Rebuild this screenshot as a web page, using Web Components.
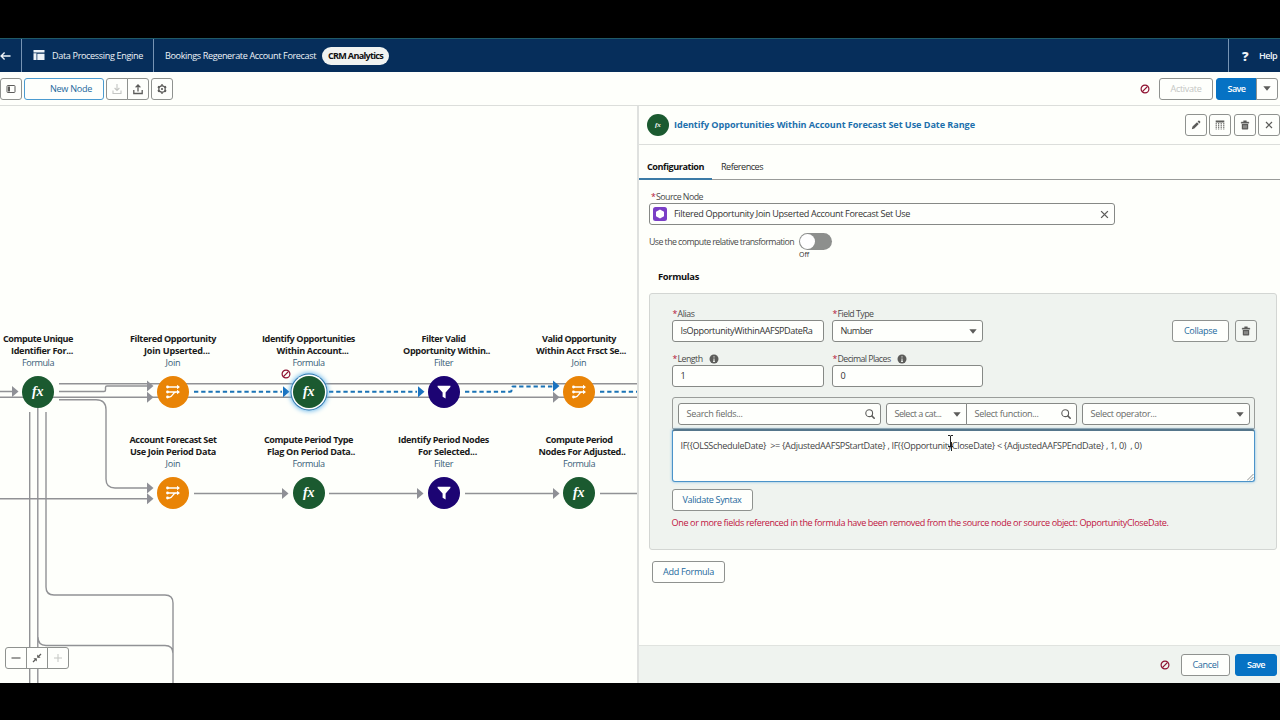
<!DOCTYPE html>
<html lang="en">
<head>
<meta charset="utf-8">
<title>Data Processing Engine</title>
<style>
  html, body { margin: 0; height: 100%; background: #000; overflow: hidden; }
  body { font: 9.1px/12px "Open Sans", "Noto Sans", sans-serif; color: #2b2b2b; }
</style>
</head>
<body>
<dpe-app></dpe-app>

<script>
// icons, all drawn on their own viewBox
const ICONS = {
  back: ['0 0 12 10', '<path d="M11.5 5H1.2M5 1.2 1.2 5 5 8.8" fill="none" stroke="currentColor" stroke-width="1.5"/>'],
  layout: ['0 0 12 11', '<path d="M.5 0h11v2.6H.5zM.5 3.200h3V10h-3zM4.300 3.700h7.200V10H4.300z" fill="currentColor"/>'],
  panel: ['0 0 10 8', '<rect x="1" y=".5" width="8" height="7" rx=".8" fill="none" stroke="currentColor"/><path d="M2 1.5h2v5H2z" fill="currentColor"/>'],
  download: ['0 0 12 12', '<path d="M2 7.5V10.500h8V7.5M6 1v6.500M3.600 5 6 7.500 8.400 5" fill="none" stroke="currentColor" stroke-width="1.1"/>'],
  upload: ['0 0 12 12', '<path d="M1.800 7V10.500h8.400V7M6 8.500V2M3.600 4.400 6 2 8.400 4.400" fill="none" stroke="currentColor" stroke-width="1.3"/>'],
  gear: ['0 0 12 12', '<circle cx="6" cy="6" r="3.2" fill="none" stroke="currentColor" stroke-width="1.3"/><circle cx="6" cy="6" r="1.1" fill="currentColor"/><path d="M6 1.300v1.500M6 9.200v1.500M1.900 3.650l1.300.75M8.800 7.600l1.300.75M1.900 8.350l1.300-.75M8.800 4.400l1.300-.75" stroke="currentColor" stroke-width="1.800"/>'],
  ban: ['0 0 10 10', '<circle cx="5" cy="5" r="3.9" fill="none" stroke="#8e1030" stroke-width="1.2"/><path d="M2.400 7.600 7.600 2.400" stroke="#8e1030" stroke-width="1.3"/>'],
  down: ['0 0 8 5', '<path d="M.3.200h7.400L4 4.800z" fill="currentColor"/>'],
  pencil: ['0 0 10 10', '<path d="M.8 9.200l.7-2.600L6 2.200 7.800 4 3.300 8.500zM6.600 1.600l.8-.8q.5-.4 1 0l.8.8q.4.500 0 1l-.8.800z" fill="currentColor"/>'],
  table: ['0 0 10 10', '<path d="M.7.500h8.600v2H.7z" fill="currentColor"/><path d="M1.200 3v6.500M3.700 3v6.500M6.200 3v6.500M8.800 3v6.500" stroke="currentColor" stroke-width="1" stroke-dasharray="1.500 .5"/>'],
  trash: ['0 0 10 10', '<path d="M1.200 2h7.600v1.300H1.200zM3.600 2V.700h2.800V2" fill="currentColor" stroke="currentColor" stroke-width=".4"/><path d="M1.800 4h6.400v4.700q0 .8-.8.800H2.600q-.8 0-.8-.8z" fill="currentColor"/><path d="M4 5.200v3M6 5.200v3" stroke="#ddd" stroke-width=".7"/>'],
  close: ['0 0 8 8', '<path d="M1 1l6 6M7 1 1 7" stroke="currentColor" stroke-width="1.200"/>'],
  search: ['0 0 10 10', '<circle cx="4.200" cy="4.200" r="3.400" fill="none" stroke="currentColor" stroke-width="1.100"/><path d="M6.600 6.600 9.700 9.700" stroke="currentColor" stroke-width="1.500"/>'],
  info: ['0 0 10 10', '<circle cx="5" cy="5" r="4.500" fill="#5c5c5a"/><path d="M5 2.300v1.200M5 4.500v3M4 7.400h2" stroke="#eff3ef" stroke-width="1"/>'],
  hex: ['0 0 14 14', '<rect width="14" height="14" rx="2.500" fill="#7a3fc6"/><path d="M7 3.400 10.200 5.200v3.600L7 10.600 3.800 8.800V5.200z" fill="#fff" stroke="#fff" stroke-width="1.600" stroke-linejoin="round"/>'],
  minus: ['0 0 10 10', '<path d="M.5 5h9" stroke="currentColor" stroke-width="1.200"/>'],
  plus: ['0 0 10 10', '<path d="M1 5h8M5 1v8" stroke="currentColor" stroke-width="1"/>'],
  shrink: ['0 0 10 10', '<path d="M1 9l3-3M9 1 6 4" stroke="currentColor" stroke-width="1.300"/><path d="M1.400 5.200h3.400v3.400zM8.600 4.800H5.200V1.400z" fill="currentColor"/>'],
  join: ['0 0 16 16', '<g fill="none" stroke="#fff" stroke-width="1.400"><path d="M2 3h12M2 8h12M2 13h2.500C8 13 7.500 8 11 8"/></g><g fill="#fff"><circle cx="2.500" cy="3" r="1.400"/><path d="M12 .8 15 3l-3 2.200zM12 5.800 15 8l-3 2.200z"/><circle cx="2.500" cy="8" r="1.400"/><circle cx="2.500" cy="13" r="1.400"/></g>'],
  filter: ['0 0 16 16', '<path d="M1.600 1.800h12.800v1.100L9.600 8.500v6L6.600 12.800V8.500L1.600 2.900z" fill="#fff"/>'],
  formula: ['0 0 16 16', '<text x="7.800" y="11.500" text-anchor="middle" font-family="Liberation Serif, serif" font-style="italic" font-weight="bold" font-size="14" fill="#fff">fx</text>']
};

class UiIcon extends HTMLElement {
  connectedCallback() {
    const [box, body] = ICONS[this.getAttribute('name')];
    const w = this.getAttribute('w') || 10;
    const h = this.getAttribute('h') || w;
    this.attachShadow({ mode: 'open' }).innerHTML = `
      <style>:host { display: inline-flex; flex: none; } svg { display: block; }</style>
      <svg width="${w}" height="${h}" viewBox="${box}">${body}</svg>`;
  }
}

// one line of text, tracked so that it fills the width in "w"
class UiText extends HTMLElement {
  connectedCallback() {
    this.attachShadow({ mode: 'open' }).innerHTML = `
      <style>:host { display: flex; flex: none; } span { display: block; white-space: pre; }</style>
      <span><slot></slot></span>`;
    const w = parseFloat(this.getAttribute('w'));
    if (!w) return;
    const span = this.shadowRoot.querySelector('span');
    const diff = w - span.getBoundingClientRect().width;
    span.style.letterSpacing = (diff / this.textContent.length) + 'px';
  }
}

class UiButton extends HTMLElement {
  connectedCallback() {
    this.attachShadow({ mode: 'open' }).innerHTML = `
      <style>
        :host { display: flex; align-items: center; justify-content: center; flex: none;
          box-sizing: border-box; width: ${this.getAttribute('width') || 22}px; height: 22px;
          border: 1px solid #8f928f; border-radius: 3px; background: #fefffc; color: #24699c; }
        :host([icon]) { color: #5c5c5a; }
        :host([brand]) { background: #0672c4; border-color: #0672c4; color: #fff; font-weight: 600; }
        :host([outline]) { border-color: #4b9bd0; }
        :host([disabled]) { color: #c4c6c3; }
        :host([first]) { border-radius: 3px 0 0 3px; }
        :host([mid]) { border-radius: 0; margin-left: -1px; }
        :host([last]) { border-radius: 0 3px 3px 0; margin-left: -1px; }
      </style>
      <slot></slot>`;
  }
}

class UiField extends HTMLElement {
  connectedCallback() {
    this.attachShadow({ mode: 'open' }).innerHTML = `
      <style>
        :host { display: flex; align-items: center; justify-content: space-between; flex: none;
          box-sizing: border-box; width: ${this.getAttribute('width')}px; height: 22px;
          padding: 0 5px 0 8px; border: 1px solid #868986; border-radius: 3px;
          background: #fefffc; color: #333; }
        :host([placeholder]) { color: #686a68; }
        :host([first]) { border-radius: 3px 0 0 3px; }
        :host([last]) { border-radius: 0 3px 3px 0; margin-left: -1px; }
        ::slotted(ui-icon) { color: #5c5c5a; }
      </style>
      <slot></slot>`;
  }
}

class UiLabel extends HTMLElement {
  connectedCallback() {
    this.attachShadow({ mode: 'open' }).innerHTML = `
      <style>
        :host { display: flex; align-items: center; height: 12px; color: #4a4a4a; font-size: 8.800px; }
        i { font-style: normal; color: #b3123a; width: 5px; }
        ::slotted(ui-icon) { margin-left: 6px; }
      </style>
      <i>*</i><slot></slot>`;
  }
}

class AppHeader extends HTMLElement {
  connectedCallback() {
    this.attachShadow({ mode: 'open' }).innerHTML = `
      <style>
        :host { display: flex; align-items: stretch; height: 34px; flex: none; box-sizing: border-box;
          background: #062e5b; border-top: 1px solid #205a68; color: #eef3f8; }
        div { display: flex; align-items: center; box-sizing: border-box; border-right: 1px solid #7794b4; }
        .back { width: 22px; }
        .app { width: 132px; padding-left: 11px; gap: 7px; }
        .name { flex: 1; padding-left: 11px; gap: 6px; }
        .help { width: 51px; padding-left: 13px; gap: 9px; border: 0; font-weight: 600; }
        .help b { width: 8px; font-size: 13px; }
        .pill { display: flex; align-items: center; justify-content: center; width: 67px; height: 18px;
          border-radius: 9px; background: #f1f3f1; color: #111; font-weight: 700; }
      </style>
      <div class="back"><ui-icon name="back" w="11" h="10"></ui-icon></div>
      <div class="app"><ui-icon name="layout" w="12" h="11"></ui-icon><ui-text w="91">Data Processing Engine</ui-text></div>
      <div class="name"><ui-text w="151">Bookings Regenerate Account Forecast</ui-text>
        <span class="pill"><ui-text w="55">CRM Analytics</ui-text></span></div>
      <div class="help"><b>?</b><ui-text w="18">Help</ui-text></div>`;
  }
}

class AppToolbar extends HTMLElement {
  connectedCallback() {
    this.attachShadow({ mode: 'open' }).innerHTML = `
      <style>
        :host { display: flex; align-items: center; height: 34px; flex: none; box-sizing: border-box;
          padding: 0 2px 0 0; border-bottom: 1px solid #dcdedb; background: #fefffb; }
        .group { display: flex; }
        .group + .group, ui-button + ui-button, .group + ui-button { margin-left: 2px; }
        .group ui-button + ui-button { margin-left: -1px; }
        .new { padding-left: 14px; }
        .right { display: flex; align-items: center; margin-left: auto; }
        .right .act { margin: 0 3px 0 9px; }
      </style>
      <ui-button icon><ui-icon name="panel" w="10" h="8"></ui-icon></ui-button>
      <ui-button outline width="80"><ui-text class="new" w="42">New Node</ui-text></ui-button>
      <div class="group" style="margin-left:2px">
        <ui-button icon disabled first><ui-icon name="download" w="12"></ui-icon></ui-button>
        <ui-button icon last><ui-icon name="upload" w="12"></ui-icon></ui-button>
      </div>
      <ui-button icon><ui-icon name="gear" w="12"></ui-icon></ui-button>
      <div class="right">
        <ui-icon name="ban" w="10"></ui-icon>
        <ui-button class="act" disabled width="54"><ui-text w="31">Activate</ui-text></ui-button>
        <div class="group">
          <ui-button brand first width="41"><ui-text w="18">Save</ui-text></ui-button>
          <ui-button icon last width="22"><ui-icon name="down" w="8" h="5"></ui-icon></ui-button>
        </div>
      </div>`;
  }
}

const NODE_COLORS = { formula: '#1b5a30', join: '#e98406', filter: '#1c0473' };

// a node on the canvas: x and y are the centre of its circle
class FlowNode extends HTMLElement {
  connectedCallback() {
    const a = n => this.getAttribute(n);
    const type = a('type');
    const line = (text, w, dx) => `<ui-text class="t" w="${w}" style="margin-left:${(dx || 0) * 2}px">${text}</ui-text>`;
    const kind = { formula: ['Formula', 32], join: ['Join', 15], filter: ['Filter', 19] }[type];
    this.attachShadow({ mode: 'open' }).innerHTML = `
      <style>
        :host { position: absolute; left: ${a('x') - 65}px; top: ${a('y') - 59}px; width: 130px;
          display: flex; flex-direction: column; align-items: center; }
        .t { font-weight: 700; color: #1a1a1a; }
        .k { color: #396078; }
        .dot { display: flex; align-items: center; justify-content: center; width: 32px; height: 32px;
          margin-top: 7px; border-radius: 50%; background: ${NODE_COLORS[type]}; }
        :host([selected]) .dot { box-shadow: 0 0 0 1.500px #fff, 0 0 0 2.500px #2e76ab, 0 0 5px 3px #5cb0ea; }
        .ban { position: absolute; left: 37px; top: 36px; }
      </style>
      ${line(a('l1'), a('w1'))}
      ${line(a('l2'), a('w2'), a('dx'))}
      <ui-text class="k" w="${kind[1]}">${kind[0]}</ui-text>
      <div class="dot"><ui-icon name="${type}" w="16"></ui-icon></div>
      ${this.hasAttribute('selected') ? '<ui-icon class="ban" name="ban" w="10"></ui-icon>' : ''}`;
  }
}

class FlowCanvas extends HTMLElement {
  connectedCallback() {
    const arrow = (x, y, c) => `<path d="M${x} ${y - 5.5}v11l6.500-5.500z" fill="${c || '#8f9096'}" stroke="none"/>`;
    this.attachShadow({ mode: 'open' }).innerHTML = `
      <style>
        :host { display: block; position: relative; flex: none; width: 637px; overflow: hidden; background: #fefffb; }
        svg { display: block; }
        .zoom { position: absolute; left: 5px; top: 541px; display: flex; }
      </style>
      <svg width="637" height="577" viewBox="0 106 637 577" fill="none" stroke="#919295" stroke-width="1.400">
        <path d="M0 391.500h12M0 397.300H637M59 383.700H637M59 391.500h45q1.500 0 1.500-1.500V387.500q0-1.500 1.500-1.500h40"/>
        <path d="M59 399.700h37q10 0 10 10V479q0 9 9 9h32M0 498.700h147"/>
        <path d="M194 493.500h88M329 493.500h88M465 493.500h88M600 493.500h37"/>
        <path d="M29.700 412v271M37.800 408v275M46 412v175q0 8 8 8h111q8 0 8 8v80M38 637q0 8.500 8 8.500h119q8 0 8 8"/>
        ${arrow(12, 391.5)}${arrow(147, 386)}${arrow(147, 397.3)}${arrow(553, 397.3)}
        ${arrow(147, 488)}${arrow(147, 498.7)}${arrow(282, 493.5)}${arrow(417, 493.5)}${arrow(553, 493.5)}
        <g stroke="#1a73b5" stroke-width="2" stroke-dasharray="4.300 2.900">
          <path d="M194 391.700h88M329 391.700h88M465 391.700h45q1.500 0 1.500-1.500V388q0-1.500 1.500-1.500h40M600 391.700h37"/>
        </g>
        ${arrow(283, 391.7, '#1a73c0')}${arrow(418, 391.7, '#1a73c0')}${arrow(553, 386, '#1a73c0')}
      </svg>
      <flow-node type="formula" x="38" y="286" l1="Compute Unique" w1="70" l2="Identifier For..." w2="62" dx="4"></flow-node>
      <flow-node type="join" x="173" y="286" l1="Filtered Opportunity" w1="86" l2="Join Upserted..." w2="66" dx="4"></flow-node>
      <flow-node selected type="formula" x="308.500" y="286" l1="Identify Opportunities" w1="93" l2="Within Account..." w2="72" dx="4"></flow-node>
      <flow-node type="filter" x="443.500" y="286" l1="Filter Valid" w1="44" l2="Opportunity Within.." w2="87" dx="3"></flow-node>
      <flow-node type="join" x="579" y="286" l1="Valid Opportunity" w1="74" l2="Within Acct Frsct Se..." w2="90" dx="2"></flow-node>
      <flow-node type="join" x="173" y="387.300" l1="Account Forecast Set" w1="87" l2="Use Join Period Data" w2="86"></flow-node>
      <flow-node type="formula" x="308.500" y="387.300" l1="Compute Period Type" w1="89" l2="Flag On Period Data.." w2="88" dx="2.500"></flow-node>
      <flow-node type="filter" x="443.500" y="387.300" l1="Identify Period Nodes" w1="91" l2="For Selected..." w2="59" dx="4"></flow-node>
      <flow-node type="formula" x="579" y="387.300" l1="Compute Period" w1="67" l2="Nodes For Adjusted.." w2="87" dx="3"></flow-node>
      <div class="zoom">
        <ui-button icon first><ui-icon name="minus"></ui-icon></ui-button>
        <ui-button icon mid><ui-icon name="shrink"></ui-icon></ui-button>
        <ui-button icon disabled last><ui-icon name="plus"></ui-icon></ui-button>
      </div>`;
  }
}

class FormulaCard extends HTMLElement {
  connectedCallback() {
    this.attachShadow({ mode: 'open' }).innerHTML = `
      <style>
        :host { display: block; box-sizing: border-box; width: 628px; height: 257px; padding: 14px 21px 0 21.500px;
          border: 1px solid #d3d6d3; border-radius: 3px; background: #eff3ef; }
        .top { display: flex; }
        .grid { display: grid; grid-template-columns: 152px 151px; column-gap: 8px; row-gap: 11px; }
        .cell ui-label { padding-left: 1px; }
        .actions { display: flex; gap: 6px; margin: 12px -2px 0 auto; }
        .actions ui-button:last-child { background: #f4f7f3; }
        .bar { display: flex; align-items: flex-start; box-sizing: border-box; width: 583px; height: 32px; margin-top: 10px;
          padding: 5px 5px 0; border: 1px solid #9a9d9a; border-radius: 3px 3px 0 0; }
        .bar .gap { margin-left: 5px; }
        .area { position: relative; box-sizing: border-box; width: 583px; height: 53px; padding: 9px 8px;
          border: 1px solid #4b93c9; border-top: 2px solid #55768b; border-radius: 3px;
          background: #fefffc; color: #444; box-shadow: 0 0 3px #7db9e3; }
        .area svg { position: absolute; right: 0; bottom: 0; }
        .area .beam { left: 273px; top: 4px; right: auto; bottom: auto; }
        ui-button.check { margin-top: 7px; }
        .error { margin-top: 6px; color: #c0143f; }
      </style>
      <div class="top">
        <div class="grid">
          <div class="cell"><ui-label><ui-text w="17">Alias</ui-text></ui-label>
            <ui-field width="152"><ui-text w="132">IsOpportunityWithinAAFSPDateRa</ui-text></ui-field></div>
          <div class="cell"><ui-label><ui-text w="36">Field Type</ui-text></ui-label>
            <ui-field width="151"><ui-text w="32">Number</ui-text><ui-icon name="down" w="8" h="5"></ui-icon></ui-field></div>
          <div class="cell"><ui-label><ui-text w="25">Length</ui-text><ui-icon name="info"></ui-icon></ui-label>
            <ui-field width="152"><ui-text>1</ui-text></ui-field></div>
          <div class="cell"><ui-label><ui-text w="53">Decimal Places</ui-text><ui-icon name="info"></ui-icon></ui-label>
            <ui-field width="151"><ui-text>0</ui-text></ui-field></div>
        </div>
        <div class="actions">
          <ui-button width="57"><ui-text w="33">Collapse</ui-text></ui-button>
          <ui-button icon><ui-icon name="trash"></ui-icon></ui-button>
        </div>
      </div>
      <div class="bar">
        <ui-field placeholder width="203"><ui-text w="56">Search fields...</ui-text><ui-icon name="search"></ui-icon></ui-field>
        <ui-field class="gap" placeholder first width="81"><ui-text w="47">Select a cat...</ui-text><ui-icon name="down" w="8" h="5"></ui-icon></ui-field>
        <ui-field placeholder last width="111"><ui-text w="64">Select function...</ui-text><ui-icon name="search"></ui-icon></ui-field>
        <ui-field style="margin-left:5px" placeholder width="168"><ui-text w="66">Select operator...</ui-text><ui-icon name="down" w="8" h="5"></ui-icon></ui-field>
      </div>
      <div class="area">
        <ui-text w="461">IF({OLSScheduleDate}  &gt;= {AdjustedAAFSPStartDate} , IF({OpportunityCloseDate} &lt; {AdjustedAAFSPEndDate} , 1, 0)  , 0)</ui-text>
        <svg class="beam" width="9" height="16" fill="none" stroke="#222"><path d="M2 .5h2l.5.500.5-.5h2M4.500 1v10M2 11.500h5M5.500 7v9"/></svg>
        <svg width="7" height="7" stroke="#777" stroke-width=".8"><path d="M0 6.500 6.500 0M3 6.500 6.500 3"/></svg>
      </div>
      <ui-button class="check" width="81"><ui-text w="59">Validate Syntax</ui-text></ui-button>
      <div class="error"><ui-text w="497">One or more fields referenced in the formula have been removed from the source node or source object: OpportunityCloseDate.</ui-text></div>`;
  }
}

class SidePanel extends HTMLElement {
  connectedCallback() {
    this.attachShadow({ mode: 'open' }).innerHTML = `
      <style>
        :host { display: flex; flex-direction: column; flex: 1; min-width: 0; box-sizing: border-box;
          border-left: 2px solid #dfe1df; background: #fefffb; }
        .head { display: flex; align-items: center; height: 39px; flex: none; box-sizing: border-box;
          padding: 0 0 1px 8px; border-bottom: 1px solid #dcdedb; }
        .badge { display: flex; align-items: center; justify-content: center; width: 22px; height: 22px;
          margin-right: 5px; border-radius: 50%; background: #1b5a30; }
        .title { color: #1c70ad; font-weight: 700; }
        .tools { display: flex; gap: 2.400px; margin-left: auto; }
        .tabs { display: flex; height: 35px; flex: none; box-sizing: border-box; border-bottom: 1px solid #999b99; }
        .tabs div { display: flex; align-items: center; padding: 9px 9px 0; margin-bottom: -1px; }
        .tabs .on { padding: 11px 8px 0; border-bottom: 2px solid #3c7ba6; color: #111; font-weight: 700; }
        .body { flex: 1; padding: 11px 3px 0 10px; }
        .body > ui-label { padding-left: 2px; }
        .source { padding: 0 5px 0 3px; }
        .source ui-text { margin: 0 auto 0 7px; }
        .toggle { display: flex; align-items: flex-start; height: 38px; margin-top: 7.500px; }
        .toggle > ui-text { margin: 3px 5px 0 0; font-size: 8.800px; color: #4a4a4a; }
        .sw { display: block; box-sizing: border-box; width: 33px; height: 17px; border-radius: 9px; padding: 1px; background: #8d8f8d; }
        .sw i { display: block; width: 15px; height: 15px; border-radius: 50%; background: #fff; }
        .off { display: block; font-size: 7px; line-height: 9px; }
        h3 { display: flex; margin: 0 0 10.500px 9px; font-size: 9.400px; color: #111; }
        .add { margin: 11px 0 0 3px; }
        .foot { display: flex; align-items: center; justify-content: flex-end; height: 38px; flex: none;
          box-sizing: border-box; padding-right: 3px; border-top: 1px solid #e0e3df; background: #eff3ef; }
      </style>
      <div class="head">
        <span class="badge"><ui-icon name="formula" w="8"></ui-icon></span>
        <ui-text class="title" w="301">Identify Opportunities Within Account Forecast Set Use Date Range</ui-text>
        <div class="tools">
          <ui-button icon><ui-icon name="pencil"></ui-icon></ui-button>
          <ui-button icon><ui-icon name="table"></ui-icon></ui-button>
          <ui-button icon><ui-icon name="trash"></ui-icon></ui-button>
          <ui-button icon><ui-icon name="close" w="8"></ui-icon></ui-button>
        </div>
      </div>
      <div class="tabs">
        <div class="on"><ui-text w="57">Configuration</ui-text></div>
        <div><ui-text w="42">References</ui-text></div>
      </div>
      <div class="body">
        <ui-label><ui-text w="47">Source Node</ui-text></ui-label>
        <ui-field class="source" width="466"><ui-icon name="hex" w="14"></ui-icon><ui-text w="236">Filtered Opportunity Join Upserted Account Forecast Set Use</ui-text><ui-icon name="close" w="9"></ui-icon></ui-field>
        <div class="toggle"><ui-text w="145">Use the compute relative transformation</ui-text>
          <span><span class="sw"><i></i></span><span class="off"><ui-text w="10">Off</ui-text></span></span></div>
        <h3><ui-text w="41">Formulas</ui-text></h3>
        <formula-card></formula-card>
        <ui-button class="add" width="73"><ui-text w="51">Add Formula</ui-text></ui-button>
      </div>
      <div class="foot">
        <ui-icon name="ban" w="10"></ui-icon>
        <ui-button width="49" style="margin:0 5px 0 11px"><ui-text w="26">Cancel</ui-text></ui-button>
        <ui-button brand width="42"><ui-text w="18">Save</ui-text></ui-button>
      </div>`;
  }
}

class DpeApp extends HTMLElement {
  connectedCallback() {
    this.attachShadow({ mode: 'open' }).innerHTML = `
      <style>
        :host { display: flex; flex-direction: column; box-sizing: border-box; width: 1280px; height: 720px;
          padding: 38px 0 37px; background: #000; }
        main { display: flex; flex: 1; min-height: 0; }
      </style>
      <app-header></app-header>
      <app-toolbar></app-toolbar>
      <main><flow-canvas></flow-canvas><side-panel></side-panel></main>`;
  }
}

customElements.define('dpe-app', DpeApp);
customElements.define('app-header', AppHeader);
customElements.define('app-toolbar', AppToolbar);
customElements.define('flow-canvas', FlowCanvas);
customElements.define('flow-node', FlowNode);
customElements.define('side-panel', SidePanel);
customElements.define('formula-card', FormulaCard);
customElements.define('ui-button', UiButton);
customElements.define('ui-field', UiField);
customElements.define('ui-label', UiLabel);
customElements.define('ui-icon', UiIcon);
// last, because it measures its text with the styles of all the others
customElements.define('ui-text', UiText);
</script>
</body>
</html>
